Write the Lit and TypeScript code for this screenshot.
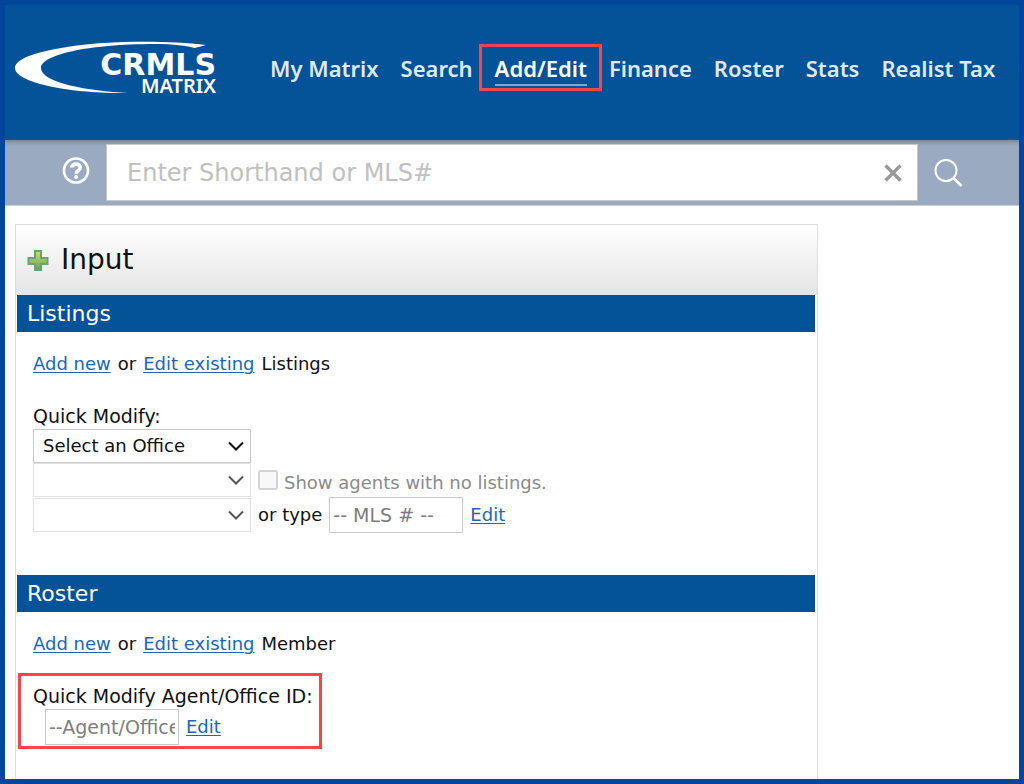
import { LitElement, html, css } from "lit";
import { customElement, property } from "lit/decorators.js";

@customElement("matrix-header")
class MatrixHeader extends LitElement {
  static styles = css`
    :host {
      display: block;
      background: #045297;
    }
    .bar {
      display: flex;
      align-items: center;
      gap: 53px;
      padding: 36px 0 44px 10px;
    }
    .logo {
      display: block;
      flex: none;
      width: 202px;
      height: 55px;
      overflow: visible;
      fill: #fff;
    }
    .brand {
      font: bold 30px "DejaVu Sans", sans-serif;
    }
    .product {
      font: 600 20px "Noto Sans", sans-serif;
    }
    nav {
      display: flex;
      flex: 1;
      min-width: 0;
      gap: 22px;
      white-space: nowrap;
    }
    .item {
      position: relative;
      font: 600 22px/32px "Noto Sans", sans-serif;
      color: #dfe9f5;
      text-decoration: none;
      border-bottom: 2px solid transparent;
    }
    .item.current {
      color: #fff;
      border-color: #7fa5cb;
    }
    .mark {
      position: absolute;
      inset: -8px -15px -7px -16px;
      border: 3px solid #f94449;
    }
  `;

  items = ["My Matrix", "Search", "Add/Edit", "Finance", "Roster", "Stats", "Realist Tax", "Help"];

  render() {
    return html`<header class="bar">
      <svg class="logo" viewBox="0 0 202 55" role="img" aria-label="CRMLS Matrix">
        <path
          d="M191 4 C150 -1 88 0 52 6 C20 11 0 18 0 27 C0 42 58 53 113 52 C74 50 26 42 26 27 C26 14 72 3 140 3 C158 3 172 5 180 7 Z"
        />
        <text class="brand" x="201" y="34" text-anchor="end">CRMLS</text>
        <text class="product" x="201" y="52" text-anchor="end">MATRIX</text>
      </svg>
      <nav>
        ${this.items.map((name) =>
          name === "Add/Edit"
            ? html`<a class="item current" href="#">${name}<span class="mark"></span></a>`
            : html`<a class="item" href="#">${name}</a>`
        )}
      </nav>
    </header>`;
  }
}

@customElement("matrix-search")
class MatrixSearch extends LitElement {
  static styles = css`
    :host {
      display: block;
    }
    .bar {
      display: grid;
      grid-template-columns: 101px 1fr 101px;
      padding: 4px 0;
      background: #9aabc1;
      border-bottom: 1px solid #c9cdd2;
      box-shadow: inset 0 5px 4px -3px #6f7f95;
    }
    button {
      display: flex;
      align-items: center;
      border: 0;
      padding: 0;
      background: none;
    }
    svg {
      display: block;
      fill: none;
    }
    .help {
      justify-content: flex-end;
      padding: 0 16px 4px 0;
    }
    .go {
      padding-left: 16px;
    }
    .field {
      display: flex;
      min-width: 0;
      height: 55px;
      border: 1px solid #c8c8c8;
      background: #fff;
    }
    input {
      flex: 1;
      min-width: 0;
      border: 0;
      outline: 0;
      padding: 0 20px;
      background: none;
      font: 24px "DejaVu Sans", sans-serif;
    }
    input::placeholder {
      color: #c0c0c0;
      opacity: 1;
    }
    .clear {
      padding-right: 15px;
    }
  `;

  render() {
    return html`<form class="bar" role="search">
      <button class="help" type="button" aria-label="Help">
        <svg width="28" height="28" viewBox="0 0 28 28" stroke="#fff">
          <circle cx="14" cy="13.500" r="12" stroke-width="2.600" />
          <path d="M9.700 10.500 C10 6 18.200 6 18.200 10.500 C18.200 13.500 14.200 13.300 14.200 16.800" stroke-width="3.600" />
          <circle cx="14.200" cy="20" r="1.300" stroke-width="1.400" fill="#fff" />
        </svg>
      </button>
      <div class="field">
        <input type="text" aria-label="Shorthand or MLS number" placeholder="Enter Shorthand or MLS#" />
        <button class="clear" type="button" aria-label="Clear">
          <svg width="18" height="18" viewBox="0 0 18 18" stroke="#999" stroke-width="3.400">
            <path d="M1.500 1.500 L16.500 16.500 M16.500 1.500 L1.500 16.500" />
          </svg>
        </button>
      </div>
      <button class="go" type="button" aria-label="Search">
        <svg width="30" height="30" viewBox="0 0 30 30" stroke="#fff" stroke-width="2">
          <circle cx="12" cy="12.500" r="10.500" />
          <path d="M19.500 20 L27.500 28" stroke-width="2.500" />
        </svg>
      </button>
    </form>`;
  }
}

@customElement("office-select")
class OfficeSelect extends LitElement {
  @property() label = "";
  @property() text = "";
  @property({ type: Boolean }) disabled = false;

  static styles = css`
    :host {
      display: grid;
      width: 218px;
      height: 34px;
    }
    select,
    svg {
      grid-area: 1 / 1;
    }
    select {
      appearance: none;
      width: 100%;
      margin: 0;
      border: 1px solid #c8c8c8;
      border-radius: 0;
      padding: 0 28px 2px 9px;
      background: #fff;
      color: #111;
      font: 18px "DejaVu Sans", sans-serif;
    }
    select:disabled {
      border-color: #e2e2e2;
      opacity: 1;
    }
    svg {
      align-self: center;
      justify-self: end;
      margin-right: 7px;
      fill: none;
      stroke: #111;
      stroke-width: 2;
      pointer-events: none;
    }
    select:disabled + svg {
      stroke: #555;
    }
  `;

  render() {
    return html`<select aria-label=${this.label} ?disabled=${this.disabled}>
        <option>${this.text}</option>
      </select>
      <svg width="16" height="10" viewBox="0 0 16 10"><path d="M1 1.500 L8 8.500 L15 1.500" /></svg>`;
  }
}

@customElement("input-panel")
class InputPanel extends LitElement {
  static styles = css`
    :host {
      display: flex;
      flex: 1;
      flex-direction: column;
      box-sizing: border-box;
      max-width: 803px;
      border: 1px solid #ddd;
      border-bottom: 0;
      background: #fff;
      color: #111;
      font: 18px/26px "DejaVu Sans", sans-serif;
    }
    .title {
      display: flex;
      align-items: center;
      gap: 12px;
      margin: 0;
      padding: 17px 11px;
      background: linear-gradient(#fff, #e4e4e4);
      font-size: 28px;
      font-weight: 400;
      line-height: 36px;
    }
    h3 {
      margin: 0 2px 0 1px;
      padding: 0 10px;
      background: #045297;
      color: #fff;
      font-size: 22px;
      font-weight: 400;
      line-height: 37px;
    }
    .body {
      padding: 19px 17px 42px;
    }
    .links {
      display: flex;
      gap: 7px;
      margin-bottom: 26px;
    }
    a {
      color: #1b66b8;
      text-underline-offset: 2px;
      text-decoration-thickness: 1px;
    }
    .row {
      display: flex;
      align-items: center;
      gap: 7px;
    }
    .caption {
      display: block;
      font-size: 19px;
    }
    .tick {
      display: flex;
      align-items: flex-start;
      gap: 6px;
      padding-top: 6px;
      color: #8a8a8a;
    }
    .tick input {
      appearance: none;
      box-sizing: border-box;
      width: 20px;
      height: 20px;
      margin: 0;
      border: 2px solid #d4d4d4;
      border-radius: 3px;
      background: #f8f8f8;
    }
    .code {
      box-sizing: border-box;
      width: 134px;
      height: 36px;
      border: 1px solid #c8c8c8;
      border-radius: 0;
      padding: 0 3px;
      font: 19px "DejaVu Sans", sans-serif;
    }
    .code::placeholder {
      color: #7d7d7d;
      opacity: 1;
    }
    .agent {
      position: relative;
    }
    .agent .row {
      padding-left: 12px;
    }
    .mark {
      position: absolute;
      top: -10px;
      left: -15px;
      width: 298px;
      bottom: -4px;
      border: 3px solid #f94449;
      pointer-events: none;
    }
  `;

  render() {
    return html`
      <h2 class="title">
        <svg width="22" height="22" viewBox="0 0 22 22" aria-hidden="true">
          <defs>
            <linearGradient id="leaf" x2="0" y2="1">
              <stop stop-color="#cbe06c" />
              <stop offset="1" stop-color="#6ea04a" />
            </linearGradient>
          </defs>
          <path
            d="M8 2 H14 V9 H20.500 V15 H14 V21 H8 V15 H1.500 V9 H8 Z"
            fill="url(#leaf)"
            stroke="#62a57c"
            stroke-width="2"
          />
        </svg>
        Input
      </h2>
      <section>
        <h3>Listings</h3>
        <div class="body">
          <div class="links">
            <a href="#">Add new</a><span>or</span><a href="#">Edit existing</a><span>Listings</span>
          </div>
          <span class="caption">Quick Modify:</span>
          <office-select label="Office" text="Select an Office"></office-select>
          <div class="row">
            <office-select label="Agent" disabled></office-select>
            <label class="tick"><input type="checkbox" disabled />Show agents with no listings.</label>
          </div>
          <div class="row">
            <office-select label="Listing" disabled></office-select>
            <label for="mls">or type</label>
            <input class="code" id="mls" type="text" placeholder="-- MLS # --" />
            <a href="#">Edit</a>
          </div>
        </div>
      </section>
      <section>
        <h3>Roster</h3>
        <div class="body">
          <div class="links">
            <a href="#">Add new</a><span>or</span><a href="#">Edit existing</a><span>Member</span>
          </div>
          <div class="agent">
            <label class="caption" for="agent">Quick Modify Agent/Office ID:</label>
            <div class="row">
              <input class="code" id="agent" type="text" placeholder="--Agent/Office ID--" />
              <a href="#">Edit</a>
            </div>
            <div class="mark"></div>
          </div>
        </div>
      </section>
    `;
  }
}

@customElement("app-root")
class AppRoot extends LitElement {
  static styles = css`
    :host {
      display: flex;
      flex-direction: column;
      box-sizing: border-box;
      height: 100vh;
      overflow: hidden;
      border: 5px solid #00479c;
      background: #fff;
    }
    main {
      display: flex;
      flex: 1;
      min-height: 0;
      padding: 18px 10px 0;
    }
  `;

  render() {
    return html`<matrix-header></matrix-header>
      <matrix-search></matrix-search>
      <main><input-panel></input-panel></main>`;
  }
}
